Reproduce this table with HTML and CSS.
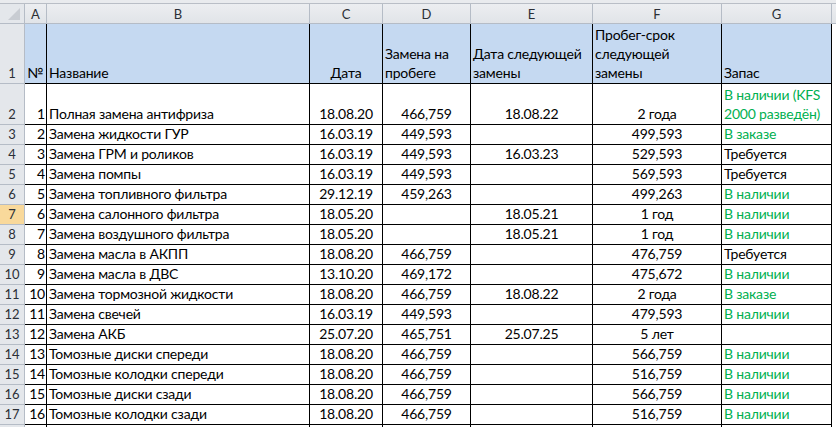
FILE: index.html
```html
<!DOCTYPE html>
<html lang="ru">
<head>
<meta charset="utf-8">
<title>Sheet</title>
<link rel="stylesheet" href="styles.css">
</head>
<body>
<div class="sheet">
  <div class="topbar"></div>
  <div class="grid">
    <div class="corner"><span class="tri"></span></div>
    <div class="ch">A</div><div class="ch">B</div><div class="ch">C</div><div class="ch">D</div><div class="ch">E</div><div class="ch">F</div><div class="ch">G</div><div class="ch end"></div>

    <div class="rh">1</div>
    <div class="c hd"><span>№</span></div>
    <div class="c hd"><span>Название</span></div>
    <div class="c hd ctr"><span>Дата</span></div>
    <div class="c hd"><span>Замена на пробеге</span></div>
    <div class="c hd"><span>Дата следующей замены</span></div>
    <div class="c hd"><span>Пробег-срок следующей замены</span></div>
    <div class="c hd"><span>Запас</span></div>
    <div class="e"></div>

    <div class="rh">2</div>
    <div class="c r"><span>1</span></div>
    <div class="c"><span>Полная замена антифриза</span></div>
    <div class="c ctr"><span>18.08.20</span></div>
    <div class="c ctr"><span>466,759</span></div>
    <div class="c ctr"><span>18.08.22</span></div>
    <div class="c ctr"><span>2 года</span></div>
    <div class="c g wrap"><span>В наличии (KFS 2000 разведён)</span></div>
    <div class="e"></div>

    <div class="rh">3</div>
    <div class="c r"><span>2</span></div>
    <div class="c"><span>Замена жидкости ГУР</span></div>
    <div class="c ctr"><span>16.03.19</span></div>
    <div class="c ctr"><span>449,593</span></div>
    <div class="c ctr"><span></span></div>
    <div class="c ctr"><span>499,593</span></div>
    <div class="c g"><span>В заказе</span></div>
    <div class="e"></div>

    <div class="rh">4</div>
    <div class="c r"><span>3</span></div>
    <div class="c"><span>Замена ГРМ и роликов</span></div>
    <div class="c ctr"><span>16.03.19</span></div>
    <div class="c ctr"><span>449,593</span></div>
    <div class="c ctr"><span>16.03.23</span></div>
    <div class="c ctr"><span>529,593</span></div>
    <div class="c"><span>Требуется</span></div>
    <div class="e"></div>

    <div class="rh">5</div>
    <div class="c r"><span>4</span></div>
    <div class="c"><span>Замена помпы</span></div>
    <div class="c ctr"><span>16.03.19</span></div>
    <div class="c ctr"><span>449,593</span></div>
    <div class="c ctr"><span></span></div>
    <div class="c ctr"><span>569,593</span></div>
    <div class="c"><span>Требуется</span></div>
    <div class="e"></div>

    <div class="rh">6</div>
    <div class="c r"><span>5</span></div>
    <div class="c"><span>Замена топливного фильтра</span></div>
    <div class="c ctr"><span>29.12.19</span></div>
    <div class="c ctr"><span>459,263</span></div>
    <div class="c ctr"><span></span></div>
    <div class="c ctr"><span>499,263</span></div>
    <div class="c g"><span>В наличии</span></div>
    <div class="e"></div>

    <div class="rh sel">7</div>
    <div class="c r"><span>6</span></div>
    <div class="c"><span>Замена салонного фильтра</span></div>
    <div class="c ctr"><span>18.05.20</span></div>
    <div class="c ctr"><span></span></div>
    <div class="c ctr"><span>18.05.21</span></div>
    <div class="c ctr"><span>1 год</span></div>
    <div class="c g"><span>В наличии</span></div>
    <div class="e"></div>

    <div class="rh">8</div>
    <div class="c r"><span>7</span></div>
    <div class="c"><span>Замена воздушного фильтра</span></div>
    <div class="c ctr"><span>18.05.20</span></div>
    <div class="c ctr"><span></span></div>
    <div class="c ctr"><span>18.05.21</span></div>
    <div class="c ctr"><span>1 год</span></div>
    <div class="c g"><span>В наличии</span></div>
    <div class="e"></div>

    <div class="rh">9</div>
    <div class="c r"><span>8</span></div>
    <div class="c"><span>Замена масла в АКПП</span></div>
    <div class="c ctr"><span>18.08.20</span></div>
    <div class="c ctr"><span>466,759</span></div>
    <div class="c ctr"><span></span></div>
    <div class="c ctr"><span>476,759</span></div>
    <div class="c"><span>Требуется</span></div>
    <div class="e"></div>

    <div class="rh">10</div>
    <div class="c r"><span>9</span></div>
    <div class="c"><span>Замена масла в ДВС</span></div>
    <div class="c ctr"><span>13.10.20</span></div>
    <div class="c ctr"><span>469,172</span></div>
    <div class="c ctr"><span></span></div>
    <div class="c ctr"><span>475,672</span></div>
    <div class="c g"><span>В наличии</span></div>
    <div class="e"></div>

    <div class="rh">11</div>
    <div class="c r"><span>10</span></div>
    <div class="c"><span>Замена тормозной жидкости</span></div>
    <div class="c ctr"><span>18.08.20</span></div>
    <div class="c ctr"><span>466,759</span></div>
    <div class="c ctr"><span>18.08.22</span></div>
    <div class="c ctr"><span>2 года</span></div>
    <div class="c g"><span>В заказе</span></div>
    <div class="e"></div>

    <div class="rh">12</div>
    <div class="c r"><span>11</span></div>
    <div class="c"><span>Замена свечей</span></div>
    <div class="c ctr"><span>16.03.19</span></div>
    <div class="c ctr"><span>449,593</span></div>
    <div class="c ctr"><span></span></div>
    <div class="c ctr"><span>479,593</span></div>
    <div class="c g"><span>В наличии</span></div>
    <div class="e"></div>

    <div class="rh">13</div>
    <div class="c r"><span>12</span></div>
    <div class="c"><span>Замена АКБ</span></div>
    <div class="c ctr"><span>25.07.20</span></div>
    <div class="c ctr"><span>465,751</span></div>
    <div class="c ctr"><span>25.07.25</span></div>
    <div class="c ctr"><span>5 лет</span></div>
    <div class="c"><span></span></div>
    <div class="e"></div>

    <div class="rh">14</div>
    <div class="c r"><span>13</span></div>
    <div class="c"><span>Томозные диски спереди</span></div>
    <div class="c ctr"><span>18.08.20</span></div>
    <div class="c ctr"><span>466,759</span></div>
    <div class="c ctr"><span></span></div>
    <div class="c ctr"><span>566,759</span></div>
    <div class="c g"><span>В наличии</span></div>
    <div class="e"></div>

    <div class="rh">15</div>
    <div class="c r"><span>14</span></div>
    <div class="c"><span>Томозные колодки спереди</span></div>
    <div class="c ctr"><span>18.08.20</span></div>
    <div class="c ctr"><span>466,759</span></div>
    <div class="c ctr"><span></span></div>
    <div class="c ctr"><span>516,759</span></div>
    <div class="c g"><span>В наличии</span></div>
    <div class="e"></div>

    <div class="rh">16</div>
    <div class="c r"><span>15</span></div>
    <div class="c"><span>Томозные диски сзади</span></div>
    <div class="c ctr"><span>18.08.20</span></div>
    <div class="c ctr"><span>466,759</span></div>
    <div class="c ctr"><span></span></div>
    <div class="c ctr"><span>566,759</span></div>
    <div class="c g"><span>В наличии</span></div>
    <div class="e"></div>

    <div class="rh">17</div>
    <div class="c r"><span>16</span></div>
    <div class="c"><span>Томозные колодки сзади</span></div>
    <div class="c ctr"><span>18.08.20</span></div>
    <div class="c ctr"><span>466,759</span></div>
    <div class="c ctr"><span></span></div>
    <div class="c ctr"><span>516,759</span></div>
    <div class="c g"><span>В наличии</span></div>
    <div class="e"></div>

    <div class="rh last"></div>
    <div class="x"></div><div class="x"></div><div class="x"></div><div class="x"></div><div class="x"></div><div class="x"></div><div class="x"></div><div class="e"></div>
  </div>
</div>
</body>
</html>
```
FILE: styles.css
```css
html, body {
  margin: 0;
  padding: 0;
  background: #ffffff;
}
.sheet {
  width: 836px;
  height: 427px;
  overflow: hidden;
  font-family: "Lato", "Open Sans", "Liberation Sans", sans-serif;
  font-size: 14px;
  letter-spacing: -0.2px;
  color: #000;
}
.topbar {
  height: 3px;
  background: #e9ebee;
  border-bottom: 1px solid #b9bec6;
}
.grid {
  display: grid;
  grid-template-columns: 25px 22px 263px 73px 88px 122px 129px 110px 4px;
  grid-template-rows: 20px 60px 41px repeat(15, 20px) 2px;
}
.grid > div {
  box-sizing: border-box;
  min-width: 0;
  overflow: hidden;
}
.corner {
  background: #e4e7eb;
  border-right: 1px solid #b5bcc6;
  border-bottom: 1px solid #b5bcc6;
  position: relative;
}
.tri {
  position: absolute;
  right: 4px;
  bottom: 3px;
  width: 0;
  height: 0;
  border-left: 12px solid transparent;
  border-bottom: 12px solid #c8ccd2;
}
.ch {
  background: linear-gradient(#eceef1, #e1e4e8);
  border-right: 1px solid #b5bcc6;
  border-bottom: 1px solid #b5bcc6;
  display: flex;
  align-items: center;
  justify-content: center;
  font-size: 13px;
  letter-spacing: 0;
  color: #2b2f36;
  padding-top: 1px;
}
.ch.end {
  border-right: none;
}
.rh {
  background: #e4e7eb;
  border-right: 1px solid #b5bcc6;
  border-bottom: 1px solid #b5bcc6;
  display: flex;
  align-items: flex-end;
  justify-content: center;
  font-size: 13px;
  line-height: 16px;
  letter-spacing: 0;
  color: #2b2f36;
  padding-bottom: 2px;
}
.rh.sel {
  background: #f9d99b;
}
.rh.last {
  border-bottom: none;
  padding-bottom: 0;
}
.c {
  border-right: 1px solid #000;
  border-bottom: 1px solid #000;
  display: flex;
  flex-direction: column;
  justify-content: flex-end;
  padding: 0 2px 2px 2px;
  line-height: 17px;
  white-space: normal;
}
.c > span {
  display: block;
}
.c.wrap {
  line-height: 19px;
  padding-bottom: 1px;
}
.hd {
  background: #c5d9f1;
  line-height: 19px;
  padding-bottom: 1px;
}
.ctr {
  text-align: center;
}
.r {
  text-align: right;
  padding-right: 1px;
}
.g {
  color: #00b050;
}
.e {
  background: #ffffff;
}
.x {
  border-right: 1px solid #000;
}
```
